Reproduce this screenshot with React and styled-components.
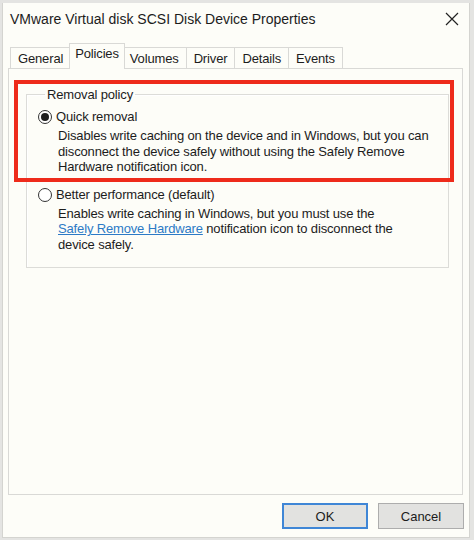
import React from "react";
import styled, { createGlobalStyle } from "styled-components";

const Global = createGlobalStyle`
  html, body { margin: 0; padding: 0; background: #e4e4e2; }
  body { width: 474px; height: 540px; overflow: hidden; font-family: "Liberation Sans", Arial, sans-serif; }
  * { box-sizing: border-box; }
`;

const Window = styled.div`
  position: relative;
  margin: 3px 4px 0 2px;
  height: 535px;
  background: #fdfdf8;
  border-left: 1px solid #d4d4d0;
  border-right: 1px solid #d4d4d0;
  border-bottom: 1px solid #d4d4d0;
  display: flex;
  flex-direction: column;
  color: #1c1c1c;
`;

const TitleBar = styled.div`
  height: 31px;
  display: flex;
  align-items: center;
  justify-content: space-between;
  padding: 0 10px 0 7px;
  font-size: 14px;
`;

const Close = styled.svg`
  width: 14px;
  height: 14px;
`;

const TabRow = styled.div`
  display: flex;
  align-items: flex-end;
  padding-left: 7px;
  height: 35px;
  position: relative;
  z-index: 1;
  margin-bottom: -1px;
`;

const Tab = styled.div`
  height: ${(p) => (p.$active ? "26px" : "22px")};
  padding: ${(p) => (p.$active ? "2px 5px 0" : "3px 7px 0")};
  margin: ${(p) => (p.$active ? "0 -2px" : "0")};
  border: 1px solid #d9d9d6;
  border-bottom: ${(p) => (p.$active ? "none" : "1px solid #d9d9d6")};
  border-left: ${(p) => (p.$first || p.$active ? "1px solid #d9d9d6" : "none")};
  background: #fdfdf8;
  font-size: 13px;
  letter-spacing: -0.15px;
  line-height: 16px;
  position: relative;
  z-index: ${(p) => (p.$active ? 2 : 1)};
`;

const Panel = styled.div`
  margin: 0 6px 0 5px;
  height: 427px;
  border: 1px solid #d9d9d6;
  background: #fdfdf8;
  padding: 18px 13px 0 17px;
`;

const Group = styled.fieldset`
  margin: 0;
  padding: 7px 10px 15px 11px;
  border: 1px solid #dcdcd8;
  box-shadow: inset 1px 1px 0 #ffffff;
  height: 181px;
`;

const Legend = styled.legend`
  font-size: 13px;
  letter-spacing: -0.15px;
  padding: 0 2px;
  margin-left: 7px;
  line-height: 15px;
`;

const Option = styled.div`
  display: flex;
  flex-direction: column;
  margin-top: ${(p) => p.$gap || "0"};
`;

const RadioRow = styled.div`
  display: flex;
  align-items: center;
  gap: 4px;
  font-size: 13px;
  letter-spacing: -0.15px;
  line-height: 16px;
`;

const Radio = styled.span`
  width: 14px;
  height: 14px;
  border-radius: 50%;
  border: 1px solid #333;
  background: #fff;
  display: flex;
  align-items: center;
  justify-content: center;
  &::after {
    content: "";
    width: 8px;
    height: 8px;
    border-radius: 50%;
    background: ${(p) => (p.$checked ? "#1e1e1e" : "transparent")};
  }
`;

const Desc = styled.p`
  margin: 3px 0 0 20px;
  font-size: 13px;
  letter-spacing: -0.15px;
  line-height: 15.5px;
  white-space: nowrap;
`;

const Link = styled.span`
  color: #2c7ac6;
  text-decoration: underline;
`;

const Highlight = styled.div`
  position: absolute;
  left: 11px;
  top: 77px;
  width: 440px;
  height: 102px;
  border: 4px solid #ee2b1b;
  pointer-events: none;
`;

const Footer = styled.div`
  display: flex;
  justify-content: flex-end;
  gap: 10px;
  padding: 8px 5px 0 0;
`;

const Button = styled.button`
  width: 86px;
  height: 26px;
  font-family: "Liberation Sans", Arial, sans-serif;
  font-size: 13px;
  color: #1c1c1c;
  background: #e2e2e0;
  border: ${(p) => (p.$default ? "2px solid #3f86d6" : "1px solid #adadad")};
  padding: 0;
`;

const tabs = ["General", "Policies", "Volumes", "Driver", "Details", "Events"];

export default function App() {
  return (
    <>
      <Global />
      <Window>
        <TitleBar>
          <span>VMware Virtual disk SCSI Disk Device Properties</span>
          <Close viewBox="0 0 14 14">
            <path d="M1 1L13 13M13 1L1 13" stroke="#222" strokeWidth="1.2" />
          </Close>
        </TitleBar>
        <TabRow>
          {tabs.map((t, i) => (
            <Tab key={t} $first={i === 0} $active={t === "Policies"}>
              {t}
            </Tab>
          ))}
        </TabRow>
        <Panel>
          <Group>
            <Legend>Removal policy</Legend>
            <Option>
              <RadioRow>
                <Radio $checked />
                Quick removal
              </RadioRow>
              <Desc>
                Disables write caching on the device and in Windows, but you can
                <br />
                disconnect the device safely without using the Safely Remove
                <br />
                Hardware notification icon.
              </Desc>
            </Option>
            <Option $gap="12px">
              <RadioRow>
                <Radio />
                Better performance (default)
              </RadioRow>
              <Desc>
                Enables write caching in Windows, but you must use the
                <br />
                <Link>Safely Remove Hardware</Link> notification icon to disconnect the
                <br />
                device safely.
              </Desc>
            </Option>
          </Group>
        </Panel>
        <Footer>
          <Button $default>OK</Button>
          <Button>Cancel</Button>
        </Footer>
        <Highlight />
      </Window>
    </>
  );
}
